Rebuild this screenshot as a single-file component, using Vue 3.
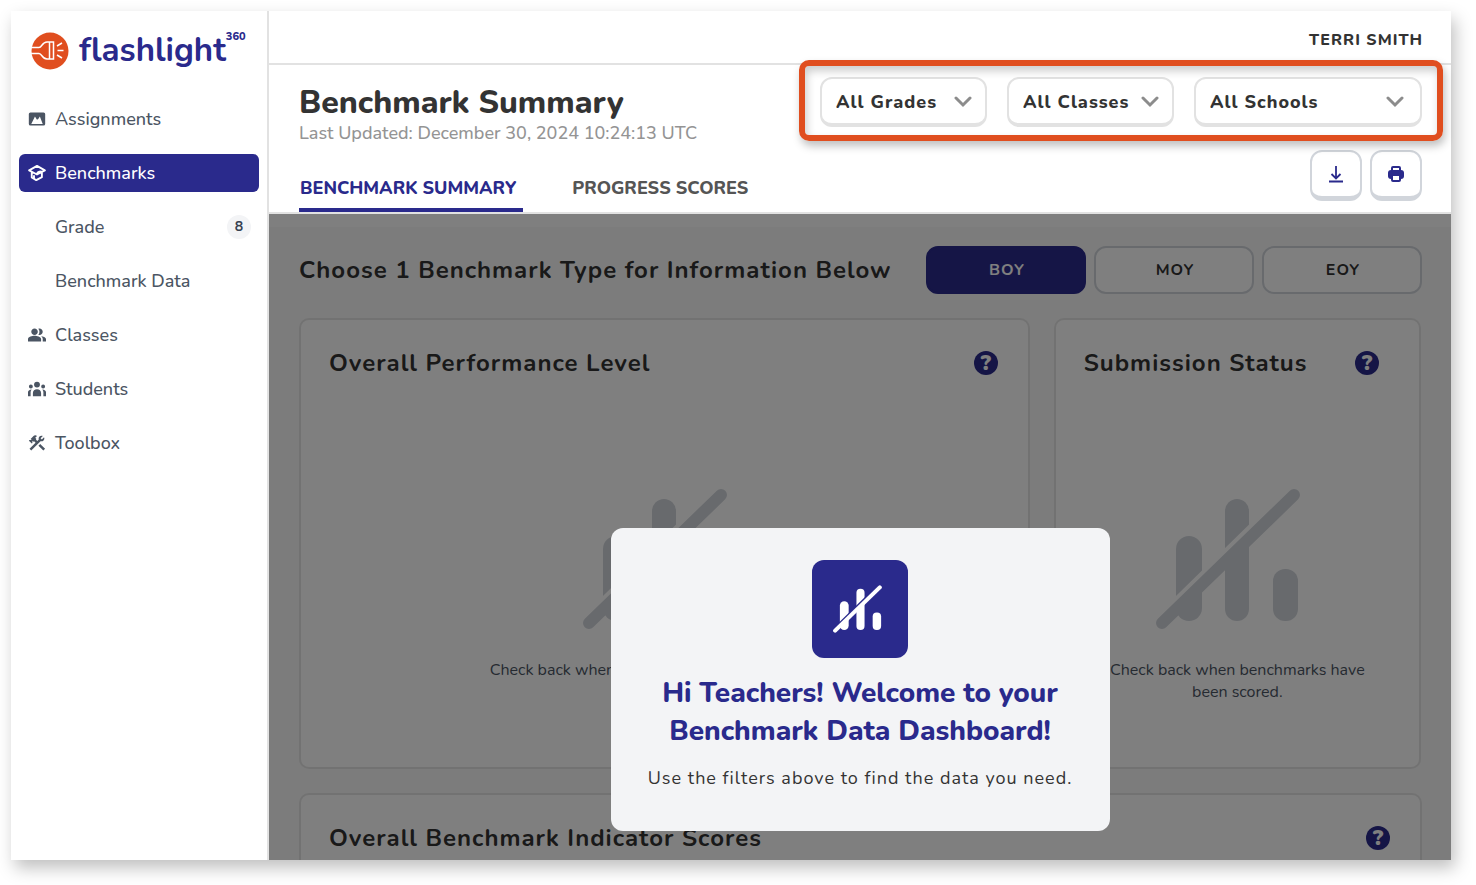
<script setup>
import { ref } from 'vue'

const navItems = [
  { label: 'Assignments', icon: 'image' },
  { label: 'Benchmarks', icon: 'cap', active: true },
  { label: 'Grade', badge: 8 },
  { label: 'Benchmark Data' },
  { label: 'Classes', icon: 'people' },
  { label: 'Students', icon: 'groups' },
  { label: 'Toolbox', icon: 'tools' }
]

const icons = {
  image: 'M4 4h16a2 2 0 0 1 2 2v12a2 2 0 0 1-2 2H4a2 2 0 0 1-2-2V6a2 2 0 0 1 2-2zm1 14h14l-3.500-9-2 3-1.500 1L9.500 9z',
  people: 'M16.670 13.130C18.040 14.060 19 15.320 19 17v3h4v-3c0-2.180-3.570-3.470-6.330-3.870zM15 12c2.210 0 4-1.790 4-4s-1.790-4-4-4c-.47 0-.91.1-1.330.24C14.500 5.270 15 6.580 15 8s-.5 2.730-1.330 3.760c.42.14.86.24 1.330.24zM9 12c2.210 0 4-1.790 4-4s-1.790-4-4-4-4 1.790-4 4 1.790 4 4 4zm0 1c-2.670 0-8 1.340-8 4v3h16v-3c0-2.660-5.330-4-8-4z',
  groups: 'M12 3a3.600 3.600 0 1 0 0 7.200A3.600 3.600 0 0 0 12 3zM4.500 6.500a2.400 2.400 0 1 0 0 4.800 2.400 2.400 0 0 0 0-4.800zM19.500 6.500a2.400 2.400 0 1 0 0 4.800 2.400 2.400 0 0 0 0-4.800zM7 21v-4c0-2.800 2-4.800 5-4.800s5 2 5 4.800v4zM1 21v-5c0-1.800 1.500-3.500 4.500-3.500-.9 1-1.300 2.200-1.300 3.500v5zM23 21v-5c0-1.800-1.500-3.500-4.500-3.500.9 1 1.300 2.200 1.300 3.500v5z',
  tools: 'M13.780 15.300l6 6 2.110-2.160-6-6zM17.500 10c1.930 0 3.500-1.570 3.500-3.500 0-.58-.16-1.120-.41-1.600l-2.700 2.700-1.490-1.490 2.700-2.700c-.48-.25-1.020-.41-1.600-.41C15.570 3 14 4.570 14 6.500c0 .41.08.8.21 1.160l-1.850 1.850-1.780-1.780.71-.71-1.410-1.410L12 3.490c-1.170-1.170-3.070-1.170-4.240 0L4.220 7.030l1.410 1.410H2.810l-.71.71 3.540 3.540.71-.71V9.150l1.410 1.410.71-.71 1.780 1.780-7.410 7.410 2.120 2.120L16.340 9.790c.36.13.75.21 1.160.21z'
}

const filters = ref([
  { id: 'grades', label: 'Grades', value: 'All Grades' },
  { id: 'classes', label: 'Classes', value: 'All Classes' },
  { id: 'schools', label: 'Schools', value: 'All Schools', wide: true }
])

const tabs = ['Benchmark Summary', 'Progress Scores']
const activeTab = ref(tabs[0])

const periods = ['BOY', 'MOY', 'EOY']
const activePeriod = ref('BOY')

const cards = [
  { title: 'Overall Performance Level', size: 'large' },
  { title: 'Submission Status', size: 'small' }
]
</script>

<template>
  <div class="page">
    <div class="app-frame">
      <aside class="sidebar">
        <a href="#" class="logo" aria-label="flashlight 360">
          <svg class="logo-mark" viewBox="0 0 38 38">
            <circle cx="19" cy="19" r="18.500" fill="#e04e1f" />
            <g fill="none" stroke="#fff" stroke-width="1.500">
              <path d="M0 15.500h8c3 0 3-5.500 8-5.500h6.500v17H16c-5 0-5-5.500-8-5.500H0" />
              <path d="M18.500 10v17" />
              <path d="M26 14l5-3M26.500 18.500h6M26 23l5 3" />
            </g>
          </svg>
          <span class="logo-text">flashlight</span><sup class="logo-sup">360</sup>
        </a>
        <nav class="nav">
          <a v-for="item in navItems" :key="item.label" href="#" class="nav-item" :class="{ 'is-active': item.active }">
            <span class="nav-icon">
              <svg v-if="item.icon === 'cap'" viewBox="0 0 24 24" fill="none" stroke="currentColor" stroke-width="2.500" stroke-linejoin="round">
                <path d="M12 2.500L1.500 8.500 12 14l10.500-5.500zM5 11v7l6 3.500 7.500-4v-7M12 14c0-3 2-4 6-4M8 15v5" />
              </svg>
              <svg v-else-if="item.icon" viewBox="1 1 22 22" fill="currentColor" fill-rule="evenodd">
                <path :d="icons[item.icon]" />
              </svg>
            </span>
            <span class="nav-label">{{ item.label }}</span>
            <span v-if="item.badge" class="badge">{{ item.badge }}</span>
          </a>
        </nav>
      </aside>

      <div class="main">
        <header class="topbar">TERRI SMITH</header>

        <section class="page-head">
          <div class="head-left">
            <h1>Benchmark Summary</h1>
            <p class="updated">Last Updated: December 30, 2024 10:24:13 UTC</p>
            <div class="tabs" role="tablist">
              <button
                v-for="tab in tabs"
                :key="tab"
                type="button"
                role="tab"
                class="tab"
                :class="{ 'is-active': tab === activeTab }"
                :aria-selected="tab === activeTab"
                @click="activeTab = tab"
              >
                {{ tab }}
              </button>
            </div>
          </div>
          <div class="head-right">
            <div class="filters">
              <div v-for="filter in filters" :key="filter.id" class="filter" :class="{ 'is-wide': filter.wide }">
                <select :id="filter.id" v-model="filter.value" :aria-label="filter.label">
                  <option>{{ filter.value }}</option>
                </select>
                <svg class="chevron" viewBox="0 0 18 12"><path d="M2 2l7 7 7-7" /></svg>
              </div>
              <div class="highlight" />
            </div>
            <div class="actions">
              <button type="button" class="action" aria-label="Download">
                <svg viewBox="0 0 20 20" fill="none" stroke="currentColor" stroke-width="1.800">
                  <path d="M10 2v12M5.500 10l4.500 4.500 4.500-4.500M3 17.500h14" />
                </svg>
              </button>
              <button type="button" class="action" aria-label="Print">
                <svg viewBox="0 0 20 20">
                  <rect x="6" y="3" width="8" height="6" rx="1" fill="#fff" stroke="currentColor" stroke-width="2" />
                  <rect x="2" y="6" width="16" height="9" rx="3" fill="currentColor" />
                  <rect x="6" y="11" width="8" height="6" rx="1" fill="#fff" stroke="currentColor" stroke-width="2" />
                </svg>
              </button>
            </div>
          </div>
        </section>

        <section class="content">
          <div class="strip" />
          <div class="content-body">
            <div class="choose">
              <h2>Choose 1 Benchmark Type for Information Below</h2>
              <div class="periods">
                <button
                  v-for="period in periods"
                  :key="period"
                  type="button"
                  class="period"
                  :class="{ 'is-active': period === activePeriod }"
                  @click="activePeriod = period"
                >
                  {{ period }}
                </button>
              </div>
            </div>

            <div class="cards">
              <article v-for="card in cards" :key="card.title" class="card" :class="`is-${card.size}`">
                <div class="card-head">
                  <h2>{{ card.title }}</h2>
                  <button type="button" class="help" aria-label="Help">?</button>
                </div>
                <div class="empty">
                  <svg viewBox="0 0 162 142">
                    <g class="bars">
                      <rect x="20" y="48" width="26" height="85" rx="13" />
                      <rect x="69" y="11" width="24" height="122" rx="12" />
                      <rect x="117" y="81" width="25" height="52" rx="12" />
                    </g>
                    <path class="gap" d="M4 132L136 3" />
                    <path class="slash" d="M6 135L138 7" />
                  </svg>
                  <p>Check back when benchmarks have been scored.</p>
                </div>
              </article>
            </div>

            <article class="card is-full">
              <div class="card-head">
                <h2>Overall Benchmark Indicator Scores</h2>
                <button type="button" class="help" aria-label="Help">?</button>
              </div>
            </article>
          </div>

          <div class="overlay">
            <div class="welcome" role="dialog" aria-labelledby="welcomeTitle">
              <div class="welcome-icon">
                <svg viewBox="0 0 162 142">
                  <g class="bars">
                    <rect x="20" y="48" width="26" height="85" rx="13" />
                    <rect x="69" y="11" width="24" height="122" rx="12" />
                    <rect x="117" y="81" width="25" height="52" rx="12" />
                  </g>
                  <path class="gap" d="M4 132L136 3" />
                  <path class="slash" d="M6 135L138 7" />
                </svg>
              </div>
              <h2 id="welcomeTitle">Hi Teachers! Welcome to your<br>Benchmark Data Dashboard!</h2>
              <p>Use the filters above to find the data you need.</p>
            </div>
          </div>
        </section>
      </div>
    </div>
  </div>
</template>

<style>
body {
  margin: 0;
  background: #fff;
  font-family: Nunito, Lato, 'Open Sans', sans-serif;
}
</style>

<style scoped>
* {
  box-sizing: border-box;
}

h1,
h2,
p {
  margin: 0;
}

button,
select {
  font-family: inherit;
  cursor: pointer;
}

.page {
  display: flex;
  height: 100vh;
  min-height: 640px;
  padding: 11px 25px 25px 11px;
}

.app-frame {
  display: flex;
  flex: 1;
  min-width: 0;
  background: #fff;
  box-shadow: 4px 8px 16px rgba(0, 0, 0, 0.25);
}

.sidebar {
  flex: none;
  width: 258px;
  border-right: 2px solid #e2e2e2;
}

.logo {
  display: flex;
  align-items: center;
  height: 80px;
  margin-bottom: 1px;
  padding-left: 20px;
  color: #2a2a8c;
  text-decoration: none;
}

.logo-mark {
  width: 38px;
  height: 38px;
  margin-right: 10px;
}

.logo-text {
  font-size: 33px;
  font-weight: 700;
  line-height: 40px;
}

.logo-sup {
  align-self: flex-start;
  margin-top: 18px;
  font-size: 11px;
  font-weight: 800;
  line-height: 16px;
}

.nav {
  display: flex;
  flex-direction: column;
  gap: 16px;
  padding: 8px;
}

.nav-item {
  display: flex;
  align-items: center;
  height: 38px;
  padding: 0 8px;
  border-radius: 6px;
  color: #4b5563;
  font-size: 18px;
  font-weight: 500;
  text-decoration: none;
}

.nav-item.is-active {
  background: #2a2a8c;
  color: #fff;
}

.nav-icon {
  width: 20px;
  height: 20px;
  margin-right: 8px;
  padding: 1px;
}

.nav-icon svg {
  display: block;
}

.nav-label {
  flex: 1;
}

.badge {
  width: 24px;
  height: 24px;
  border-radius: 12px;
  background: #f3f4f6;
  color: #374151;
  font-size: 14px;
  font-weight: 700;
  line-height: 24px;
  text-align: center;
}

.main {
  display: flex;
  flex: 1;
  flex-direction: column;
  min-width: 0;
}

.topbar {
  flex: none;
  height: 54px;
  padding: 18px 28px 0;
  border-bottom: 2px solid #e2e2e2;
  color: #333;
  font-size: 16px;
  font-weight: 800;
  letter-spacing: 1px;
  line-height: 22px;
  text-align: right;
}

.page-head {
  display: flex;
  flex: none;
  justify-content: space-between;
  padding: 12px 29px 0 30px;
  border-bottom: 2px solid #e2e2e2;
}

.head-left {
  display: flex;
  flex-direction: column;
  padding-top: 7px;
}

h1 {
  color: #333;
  font-size: 32px;
  font-weight: 800;
  line-height: 38px;
}

.updated {
  color: #949494;
  font-size: 18px;
  font-weight: 500;
  line-height: 22px;
}

.tabs {
  display: flex;
  gap: 48px;
  margin-top: auto;
}

.tab {
  height: 44px;
  padding: 0 7px 0 1px;
  border: 0;
  border-bottom: 4px solid transparent;
  background: none;
  color: #555;
  font-size: 18px;
  font-weight: 800;
  text-transform: uppercase;
}

.tab.is-active {
  border-color: #2a2a8c;
  color: #2a2a8c;
}

.head-right {
  display: flex;
  flex-direction: column;
  align-items: flex-end;
  gap: 23px;
  padding-bottom: 11px;
}

.filters {
  position: relative;
  display: flex;
  gap: 20px;
}

.filter {
  position: relative;
  width: 167px;
}

.filter.is-wide {
  width: 228px;
}

.filter select {
  width: 100%;
  height: 50px;
  padding: 2px 14px 0;
  border: 2px solid #e2e2e2;
  border-bottom-width: 4px;
  border-radius: 12px;
  appearance: none;
  background: #fff;
  color: #333;
  font-size: 18px;
  font-weight: 800;
  letter-spacing: 1px;
}

.chevron {
  position: absolute;
  top: 19px;
  right: 15px;
  width: 18px;
  height: 12px;
  fill: none;
  stroke: #8c8c8c;
  stroke-linecap: round;
  stroke-width: 3;
  pointer-events: none;
}

.is-wide .chevron {
  right: 18px;
}

.highlight {
  position: absolute;
  inset: -17px -21px -14px;
  border: 6px solid #e04e1f;
  border-radius: 10px;
  box-shadow: 2px 5px 8px rgba(0, 0, 0, 0.25), inset 2px 5px 8px rgba(0, 0, 0, 0.2);
  pointer-events: none;
}

.actions {
  display: flex;
  gap: 8px;
}

.action {
  width: 52px;
  height: 51px;
  padding: 0;
  border: 2px solid #d1d5db;
  border-bottom-width: 5px;
  border-radius: 12px;
  background: #fff;
  color: #2a2a8c;
}

.action svg {
  display: block;
  width: 20px;
  height: 20px;
  margin: 0 auto;
}

.content {
  position: relative;
  flex: 1;
  min-height: 0;
  background: #f9f9f9;
  overflow: hidden;
}

.strip {
  height: 13px;
  background: #fff;
}

.content-body {
  padding: 19px 29px 0 30px;
}

.content h2 {
  color: #333;
  font-size: 24px;
  font-weight: 700;
  letter-spacing: 1px;
  line-height: 32px;
}

.choose {
  display: flex;
  align-items: center;
  justify-content: space-between;
  height: 48px;
}

.periods {
  display: flex;
  gap: 8px;
}

.period {
  width: 160px;
  height: 48px;
  padding: 0 4px 0 6px;
  border: 2px solid #d1d5db;
  border-radius: 12px;
  background: #fff;
  color: #333;
  font-size: 16px;
  font-weight: 700;
  letter-spacing: 1px;
}

.period.is-active {
  border-color: #2a2a8c;
  background: #2a2a8c;
  color: #fff;
}

.cards {
  display: flex;
  gap: 24px;
  margin: 24px 1px 24px 0;
}

.card {
  border: 2px solid #e5e5e5;
  border-radius: 10px;
  background: #fff;
}

.card.is-large {
  flex: 2;
}

.card.is-small {
  flex: 1;
}

.card.is-full {
  height: 400px;
}

.card-head {
  display: flex;
  align-items: center;
  justify-content: space-between;
  padding: 27px 30px 0 28px;
}

.is-small .card-head {
  padding-right: 40px;
}

.help {
  width: 24px;
  height: 24px;
  padding: 0;
  border: 0;
  border-radius: 50%;
  background: #2a2a8c;
  color: #fff;
  font-size: 22px;
  font-weight: 900;
  line-height: 24px;
}

.empty {
  padding: 109px 50px 64px;
  color: #4b5563;
  font-size: 16px;
  line-height: 22px;
  text-align: center;
}

.empty svg {
  display: block;
  width: 162px;
  height: 142px;
  margin: 0 auto;
}

.empty p {
  margin-top: 29px;
}

.bars {
  fill: #d1d5db;
}

.gap,
.slash {
  fill: none;
  stroke-linecap: round;
  stroke-width: 12;
}

.gap {
  stroke: #fff;
}

.slash {
  stroke: #d1d5db;
}

.overlay {
  position: absolute;
  inset: 0;
  display: flex;
  align-items: flex-end;
  justify-content: center;
  padding-bottom: 29px;
  background: rgba(0, 0, 0, 0.5);
}

.welcome {
  width: 499px;
  padding: 32px 24px 40px;
  border-radius: 12px;
  background: #f3f4f6;
  text-align: center;
}

.welcome-icon {
  display: flex;
  align-items: center;
  justify-content: center;
  width: 96px;
  height: 98px;
  margin: 0 auto 16px;
  border-radius: 12px;
  background: #2a2a8c;
}

.welcome-icon svg {
  width: 55px;
  height: 48px;
}

.welcome-icon .bars {
  fill: #fff;
}

.welcome-icon .gap {
  stroke: #2a2a8c;
}

.welcome-icon .slash {
  stroke: #fff;
}

.content .welcome h2 {
  color: #2a2a8c;
  font-size: 28px;
  font-weight: 800;
  letter-spacing: 0;
  line-height: 38px;
}

.welcome p {
  margin-top: 16px;
  color: #333;
  font-size: 18px;
  letter-spacing: 1px;
  line-height: 25px;
}
</style>
